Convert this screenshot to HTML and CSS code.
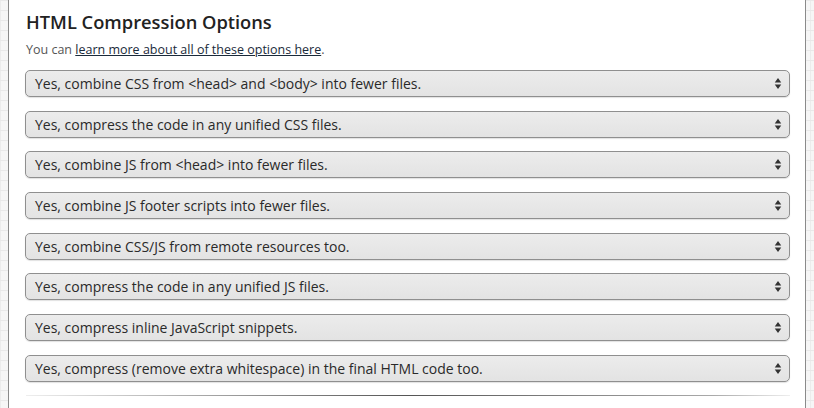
FILE: index.html
```html
<!DOCTYPE html>
<html lang="en">
  <head>
    <meta charset="UTF-8" />
    <title>HTML Compression Options</title>
    <link rel="stylesheet" href="styles.css">
  </head>
  <body>
    <div class="panel">
      <h2 class="panel__title">HTML Compression Options</h2>
      <p class="panel__intro">You can <a href="#">learn more about all of these options here</a>.</p>

      <div class="options">
        <div class="select"><span>Yes, combine CSS from &lt;head&gt; and &lt;body&gt; into fewer files.</span><svg class="select__arrows" viewBox="0 0 8 14"><path d="M4 1 L7.5 6 H0.5 Z M4 13 L7.5 8 H0.5 Z"/></svg></div>
        <div class="select"><span>Yes, compress the code in any unified CSS files.</span><svg class="select__arrows" viewBox="0 0 8 14"><path d="M4 1 L7.5 6 H0.5 Z M4 13 L7.5 8 H0.5 Z"/></svg></div>
        <div class="select"><span>Yes, combine JS from &lt;head&gt; into fewer files.</span><svg class="select__arrows" viewBox="0 0 8 14"><path d="M4 1 L7.5 6 H0.5 Z M4 13 L7.5 8 H0.5 Z"/></svg></div>
        <div class="select"><span>Yes, combine JS footer scripts into fewer files.</span><svg class="select__arrows" viewBox="0 0 8 14"><path d="M4 1 L7.5 6 H0.5 Z M4 13 L7.5 8 H0.5 Z"/></svg></div>
        <div class="select"><span>Yes, combine CSS/JS from remote resources too.</span><svg class="select__arrows" viewBox="0 0 8 14"><path d="M4 1 L7.5 6 H0.5 Z M4 13 L7.5 8 H0.5 Z"/></svg></div>
        <div class="select"><span>Yes, compress the code in any unified JS files.</span><svg class="select__arrows" viewBox="0 0 8 14"><path d="M4 1 L7.5 6 H0.5 Z M4 13 L7.5 8 H0.5 Z"/></svg></div>
        <div class="select"><span>Yes, compress inline JavaScript snippets.</span><svg class="select__arrows" viewBox="0 0 8 14"><path d="M4 1 L7.5 6 H0.5 Z M4 13 L7.5 8 H0.5 Z"/></svg></div>
        <div class="select"><span>Yes, compress (remove extra whitespace) in the final HTML code too.</span><svg class="select__arrows" viewBox="0 0 8 14"><path d="M4 1 L7.5 6 H0.5 Z M4 13 L7.5 8 H0.5 Z"/></svg></div>
      </div>

      <hr class="divider" />
    </div>
  </body>
</html>
```

FILE: styles.css
```css
/* Global styles */
* {
  padding: 0;
  margin: 0;
  box-sizing: border-box;
}

body {
  height: 408px;
  overflow: hidden;
  font-family: "Open Sans", "Noto Sans", sans-serif;
  color: #333;
  background-color: #f6f6f6;
  background-image:
    linear-gradient(#e9e9e9 1px, transparent 1px),
    linear-gradient(90deg, #ececec 1px, transparent 1px);
  background-size: 10px 10px;
  padding: 0 8px 0 8px;
}

.panel {
  height: 100%;
  background: #fff;
  border-left: 1px solid #8a8a8a;
  border-right: 1px solid #8a8a8a;
  padding: 10px 15px 0 17px;
}

.panel__title {
  font-size: 18.3px;
  font-weight: 600;
  color: #222;
  line-height: 24px;
}

.panel__intro {
  margin-top: 8px;
  font-size: 12.5px;
  line-height: 16px;
  color: #555;
}

.panel__intro a {
  color: #1a2a3a;
}

.options {
  margin-top: 12px;
  display: flex;
  flex-direction: column;
  gap: 13.7px;
}

.select {
  height: 27px;
  margin-left: -1px;
  display: flex;
  align-items: center;
  justify-content: space-between;
  padding: 0 7px 0 9px;
  font-size: 14px;
  color: #2a2a2a;
  background: linear-gradient(#ececec, #e3e3e3);
  border: 1px solid #8f8f8f;
  border-radius: 5px;
  box-shadow: 0 1px 1px rgba(0, 0, 0, 0.12);
}

.select__arrows {
  width: 8px;
  height: 13px;
  fill: #333;
}

.divider {
  margin-top: 13px;
  border: 0;
  height: 1px;
  background: linear-gradient(90deg, #eee, #555 50%, #aaa 90%, #eee);
}
```
